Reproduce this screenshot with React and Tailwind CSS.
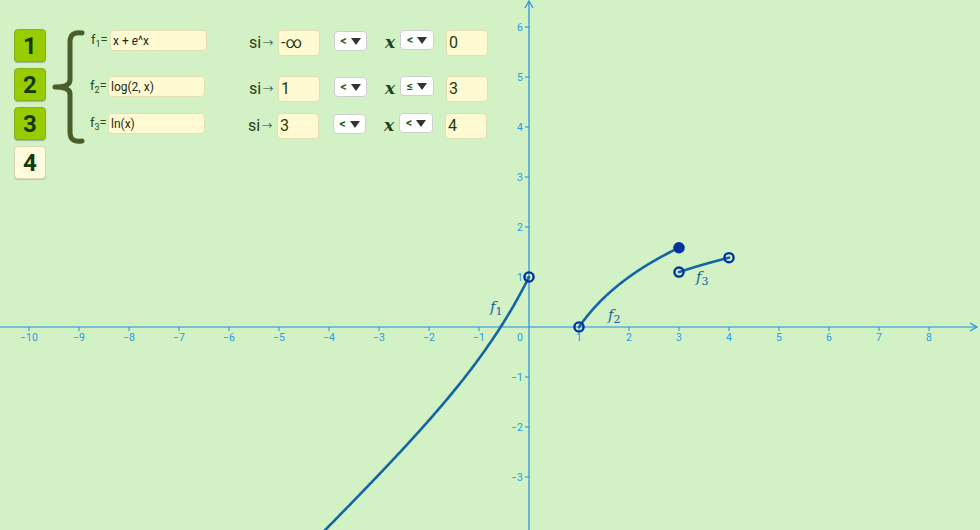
import React from "react";

const X = (x) => 529 + 50 * x;
const Y = (y) => 327 - 50 * y;

function pathOf(f, a, b, n = 200) {
  let d = "";
  for (let i = 0; i <= n; i++) {
    const x = a + ((b - a) * i) / n;
    d += (i === 0 ? "M" : "L") + X(x).toFixed(2) + "," + Y(f(x)).toFixed(2) + " ";
  }
  return d;
}

const CURVE = "#1465a3";
const PT = "#00339c";
const AXIS = "#1f8fe0";
const LAB = "#2b9ae3";

function Graph() {
  const xs = [];
  for (let i = -10; i <= 8; i++) if (i !== 0) xs.push(i);
  const ys = [-3, -2, -1, 1, 2, 3, 4, 5, 6];
  const f1 = pathOf((x) => x + Math.exp(x), -4.09, 0);
  const f2 = pathOf((x) => Math.log2(x), 1, 3);
  const f3 = pathOf((x) => Math.log(x), 3, 4);
  return (
    <svg className="absolute inset-0" width="980" height="530" viewBox="0 0 980 530">
      <line x1="0" y1="327" x2="977" y2="327" stroke={AXIS} strokeWidth="1.2" />
      <polyline points="970,323 977,327 970,331" fill="none" stroke={AXIS} strokeWidth="1.2" />
      <line x1="529" y1="530" x2="529" y2="1" stroke={AXIS} strokeWidth="1.2" />
      <polyline points="525,8 529,1 533,8" fill="none" stroke={AXIS} strokeWidth="1.2" />
      {xs.map((i) => (
        <g key={"x" + i}>
          <line x1={X(i)} y1="327" x2={X(i)} y2="331" stroke={AXIS} strokeWidth="1" />
          <text x={X(i)} y="341" fontSize="10.5" fill={LAB} textAnchor="middle" fontFamily="Roboto, sans-serif">
            {i < 0 ? "\u2212" + -i : i}
          </text>
        </g>
      ))}
      {ys.map((j) => (
        <g key={"y" + j}>
          <line x1="525" y1={Y(j)} x2="529" y2={Y(j)} stroke={AXIS} strokeWidth="1" />
          <text x="523" y={Y(j) + 4} fontSize="10.5" fill={LAB} textAnchor="end" fontFamily="Roboto, sans-serif">
            {j < 0 ? "\u2212" + -j : j}
          </text>
        </g>
      ))}
      <text x="523" y="341" fontSize="10.5" fill={LAB} textAnchor="end" fontFamily="Roboto, sans-serif">0</text>

      <path
        d="M82,33 Q70,31 70,42 L70,80 Q70,87 55,87 Q70,87 70,94 L70,132 Q70,143 82,141"
        fill="none"
        stroke="#4a5d2a"
        strokeWidth="5"
        strokeLinecap="round"
        strokeLinejoin="round"
      />

      <path d={f1} fill="none" stroke={CURVE} strokeWidth="2.6" strokeLinecap="round" />
      <path d={f2} fill="none" stroke={CURVE} strokeWidth="2.6" strokeLinecap="round" />
      <path d={f3} fill="none" stroke={CURVE} strokeWidth="2.6" strokeLinecap="round" />

      <circle cx={X(0)} cy={Y(1)} r="4.6" fill="none" stroke={PT} strokeWidth="2.4" />
      <circle cx={X(1)} cy={Y(0)} r="4.6" fill="none" stroke={PT} strokeWidth="2.4" />
      <circle cx={X(3)} cy={Y(Math.log2(3))} r="5.8" fill={PT} />
      <circle cx={X(3)} cy={Y(Math.log(3))} r="4.6" fill="none" stroke={PT} strokeWidth="2.4" />
      <circle cx={X(4)} cy={Y(Math.log(4))} r="4.6" fill="none" stroke={PT} strokeWidth="2.4" />

      <g fontFamily="'DejaVu Serif', 'Liberation Serif', serif" fill={CURVE}>
        <text x="490" y="312" fontSize="15" fontStyle="italic">f<tspan fontSize="11" fontStyle="normal" dy="3">1</tspan></text>
        <text x="608" y="320" fontSize="15" fontStyle="italic">f<tspan fontSize="11" fontStyle="normal" dy="3">2</tspan></text>
        <text x="696" y="282" fontSize="15" fontStyle="italic">f<tspan fontSize="11" fontStyle="normal" dy="3">3</tspan></text>
      </g>
    </svg>
  );
}

function NumBtn({ n, active }) {
  return (
    <div
      className={
        "w-[32px] h-[33px] rounded-[4px] flex items-center justify-center text-[24px] font-bold text-[#123a0c] " +
        (active
          ? "bg-[#99cc00] border border-[#86b020] shadow-[0_1px_1px_rgba(0,0,0,0.25)]"
          : "bg-[#fffbdc] border border-[#d9d8b8] shadow-[0_1px_1px_rgba(0,0,0,0.15)]")
      }
    >
      {n}
    </div>
  );
}

function FInput({ idx, text, lw }) {
  return (
    <div className="flex items-center h-[21px]">
      <span className={"block text-[13px] leading-[21px] text-[#2a4a1a] whitespace-nowrap " + lw}>
        f<span className="relative top-[3px] text-[9px]">{idx}</span>=
      </span>
      <div className="w-[97px] h-[21px] rounded-[4px] bg-[#fffad2] border border-[#e3dfb5] flex items-center pl-[2px] text-[12px] text-[#1d2a14]">
        {text}
      </div>
    </div>
  );
}

function Box({ children }) {
  return (
    <div className="w-[42px] h-[26px] rounded-[4px] bg-[#fffad2] border border-[#e3dfb5] flex items-center pl-[2px] text-[16px] text-[#1f3a12]">
      {children}
    </div>
  );
}

function Drop({ sym, w = "w-[33px]" }) {
  return (
    <div className={"h-[20px] rounded-[4px] bg-white border border-[#cfcfcf] flex items-center justify-center gap-[4px] " + w}>
      <span className="text-[12px] font-bold text-[#2c5a1c] leading-none">{sym}</span>
      <svg width="10" height="7" viewBox="0 0 10 7">
        <polygon points="0,0 10,0 5,7" fill="#333" />
      </svg>
    </div>
  );
}

function XVar() {
  return (
    <span className="h-[26px] flex items-center text-[17px] italic font-bold text-[#24421a]" style={{ fontFamily: "'DejaVu Serif', 'Liberation Serif', serif" }}>
      x
    </span>
  );
}

function Row({ idx, ftext, lw, siml, a, s1, s2, b, cls }) {
  return (
    <div className={"flex items-start " + cls}>
      <FInput idx={idx} text={ftext} lw={lw} />
      <span className={"h-[26px] flex items-center text-[16px] text-[#24421a] w-[29px] whitespace-nowrap " + siml}>
        si<span className="text-[13px] font-['DejaVu_Sans',sans-serif] font-light ml-[1px]">→</span>
      </span>
      <Box>{a}</Box>
      <div className="ml-[14px] mt-[1px]"><Drop sym={s1} /></div>
      <div className="ml-[13px] w-[20px] flex justify-center"><XVar /></div>
      <div><Drop sym={s2} w="w-[34px]" /></div>
      <div className="ml-[12px]"><Box>{b}</Box></div>
    </div>
  );
}

export default function App() {
  return (
    <div className="relative w-[980px] h-[530px] bg-[#d2f1c4] overflow-hidden" style={{ fontFamily: "Roboto, 'Liberation Sans', sans-serif" }}>
      <Graph />
      <div className="absolute left-[14px] top-[29px] flex">
        <div className="flex flex-col gap-[6px]">
          <NumBtn n="1" active />
          <NumBtn n="2" active />
          <NumBtn n="3" active />
          <NumBtn n="4" />
        </div>
        <div className="flex flex-col ml-[44px]">
          <Row idx="1" ftext={<span>x + <i>e</i>^x</span>} lw="w-[20px] pl-[1px]" siml="ml-[42px]" a="-∞" s1="<" s2="<" b="0" cls="mt-[1px]" />
          <Row idx="2" ftext="log(2, x)" lw="w-[18px]" siml="ml-[44px]" a="1" s1="<" s2="≤" b="3" cls="mt-[20px]" />
          <Row idx="3" ftext="ln(x)" lw="w-[18px]" siml="ml-[43px]" a="3" s1="<" s2="<" b="4" cls="mt-[11px]" />
        </div>
      </div>
    </div>
  );
}
